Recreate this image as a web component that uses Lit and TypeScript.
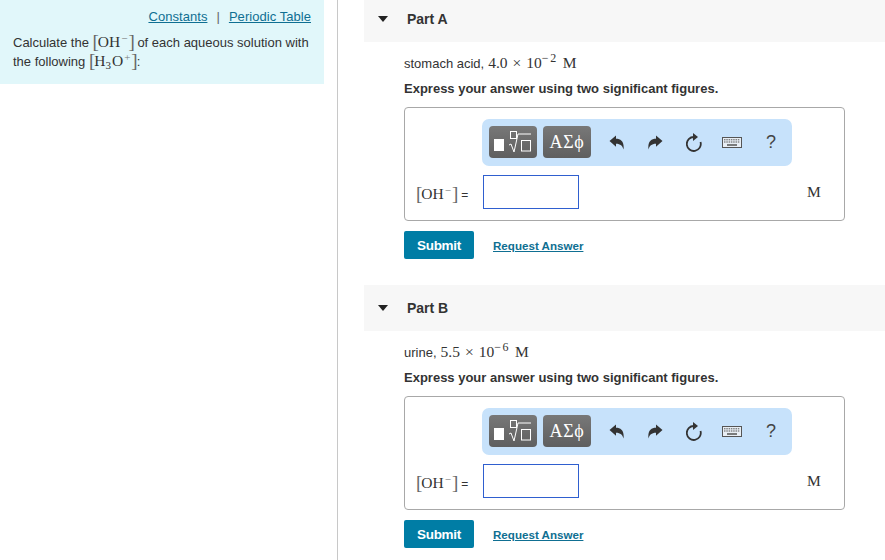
import { LitElement, html, css, svg } from 'lit';
import { customElement, property } from 'lit/decorators.js';

const back = svg`<path d="M0.500 6 L7 0.500 V3.800 C12 3.800 15.500 7 14.500 14.500 C13.500 11 11.500 8.800 7 8.800 V11.800 Z" fill="#333"/>`;

// typeset chemistry, shared by the intro and the answer label
const texStyles = css`
  .tex {
    font-family: 'Liberation Serif', serif;
    font-size: 15.500px;
    line-height: 0;
    white-space: pre;
  }
  .tex .br {
    font-size: 19px;
    font-weight: normal;
    letter-spacing: -1px;
    color: #666;
    line-height: 0;
    vertical-align: -1px;
  }
  .tex sup {
    font-size: 11px;
    line-height: 0;
    vertical-align: 5px;
    margin: 0 1px;
    color: #777;
  }
  .tex sub {
    font-size: 11px;
    line-height: 0;
    vertical-align: -3px;
    margin: 0 1px 0 0;
  }
`;

@customElement('part-block')
export class PartBlock extends LitElement {
  @property() label = '';
  @property() solution = '';
  @property() value = '';
  @property() exponent = '';

  static styles = [
    texStyles,
    css`
      :host {
        display: block;
        height: 289px;
      }
      .head {
        height: 46px;
        background: #f7f7f7;
        display: flex;
        align-items: center;
        font-weight: bold;
        font-size: 14px;
        color: #333;
      }
      .caret {
        width: 0;
        height: 0;
        margin: 0 19px 0 14px;
        border-left: 5.500px solid transparent;
        border-right: 5.500px solid transparent;
        border-top: 6px solid #222;
      }
      .body {
        padding: 8px 40px 0;
      }
      .prompt {
        height: 26px;
        display: flex;
        align-items: center;
        font-size: 13px;
        color: #333;
      }
      .math {
        font-family: 'Liberation Serif', serif;
        font-size: 15.500px;
        margin-left: 4px;
        white-space: pre;
      }
      .math .times {
        margin: 0 5px;
      }
      .math sup {
        font-size: 12px;
        line-height: 0;
        letter-spacing: 1.500px;
        vertical-align: 6px;
      }
      .math .unit-m {
        margin-left: 5px;
      }
      .hint {
        font-weight: bold;
        font-size: 13px;
        line-height: 20px;
        margin-top: 3px;
        color: #333;
      }
      .answer {
        box-sizing: border-box;
        height: 114px;
        width: 441px;
        margin-top: 8px;
        padding: 11px 0 0 11px;
        border: 1px solid #a8a8a8;
        border-radius: 4px;
      }
      .tools {
        box-sizing: border-box;
        width: 310px;
        height: 47px;
        margin-left: 66px;
        padding: 7px 6px 0 7px;
        display: flex;
        align-items: flex-start;
        background: #c7e2fb;
        border-radius: 7px;
      }
      .tool {
        box-sizing: border-box;
        width: 48px;
        height: 32px;
        margin-right: 6px;
        border-radius: 4px;
        background: linear-gradient(#787878, #5f5f5f);
        display: flex;
        align-items: center;
        justify-content: center;
        color: #fff;
      }
      .tool.sym {
        margin-right: 0;
        font-family: 'Liberation Serif', serif;
        font-size: 18px;
        letter-spacing: 0.6px;
      }
      .icons {
        display: flex;
        align-items: center;
        height: 32px;
        margin-left: 18px;
      }
      .icon {
        display: block;
        flex: none;
      }
      .undo {
        margin-right: 24px;
      }
      .redo {
        margin-right: 23px;
        transform: scaleX(-1);
      }
      .reload {
        margin-right: 20px;
      }
      .keys {
        margin-right: 24px;
      }
      .help {
        font-size: 18px;
        color: #444;
      }
      .row {
        display: flex;
        align-items: center;
        margin-top: 9px;
        height: 34px;
      }
      .lhs {
        width: 67px;
        color: #333;
        white-space: pre;
      }
      .lhs small {
        font-family: 'Liberation Sans', sans-serif;
        font-size: 12px;
      }
      .field {
        box-sizing: border-box;
        width: 96px;
        height: 34px;
        border: 1px solid #2f5fcf;
        background: #fff;
      }
      .unit {
        font-family: 'Liberation Serif', serif;
        font-size: 15.500px;
        color: #333;
        margin-left: 228px;
      }
      .actions {
        display: flex;
        align-items: center;
        margin-top: 10px;
      }
      .submit {
        box-sizing: border-box;
        width: 70px;
        height: 28px;
        border: 0;
        padding: 0;
        border-radius: 2px;
        background: #007da5;
        color: #fff;
        font: bold 13.500px 'Liberation Sans', sans-serif;
        letter-spacing: -0.3px;
      }
      .request {
        margin-left: 19px;
        font-size: 11.600px;
        font-weight: bold;
        color: #0f6f92;
        text-decoration: underline;
      }
    `,
  ];

  render() {
    return html`
      <div class="head"><span class="caret"></span>${this.label}</div>
      <div class="body">
        <div class="prompt">
          ${this.solution},
          <span class="math">${this.value}<span class="times">×</span>10<sup>−${this.exponent}</sup><span class="unit-m">M</span></span>
        </div>
        <div class="hint">Express your answer using two significant figures.</div>
        <div class="answer">
          <div class="tools">
            <div class="tool">
              <svg width="38" height="24" viewBox="0 0 38 24">
                <rect x="0" y="9" width="10" height="12" fill="#fff" />
                <rect x="16.500" y="1.500" width="6" height="7" fill="none" stroke="#fff" />
                <path d="M15 15 L17 14 L20 22 L24 4 H37" fill="none" stroke="#fff" />
                <rect x="27.500" y="10.500" width="9" height="10.500" fill="none" stroke="#fff" />
              </svg>
            </div>
            <div class="tool sym">ΑΣϕ</div>
            <div class="icons">
              <svg class="icon undo" width="15" height="15" viewBox="0 0 15 15">${back}</svg>
              <svg class="icon redo" width="15" height="15" viewBox="0 0 15 15">${back}</svg>
              <svg class="icon reload" width="16" height="19" viewBox="0 0 16 19">
                <path d="M8 4 A7 7 0 1 0 14.500 9" fill="none" stroke="#333" stroke-width="1.800" />
                <path d="M7 0 L12 4 L7 8 Z" fill="#333" />
              </svg>
              <svg class="icon keys" width="20" height="11" viewBox="0 0 20 11">
                <rect x="0.500" y="0.500" width="19" height="10" fill="#e8eef4" stroke="#555" />
                <path d="M2 2.800 H18 M2 5 H18" stroke="#555" stroke-dasharray="1.500 0.800" />
                <path d="M5 8 H15" stroke="#555" stroke-width="1.500" />
              </svg>
              <span class="help">?</span>
            </div>
          </div>
          <div class="row">
            <span class="lhs tex"><span class="br">[</span>OH<sup>−</sup><span class="br">]</span> <small>=</small></span>
            <span class="field"></span>
            <span class="unit">M</span>
          </div>
        </div>
        <div class="actions">
          <button class="submit">Submit</button>
          <a class="request">Request Answer</a>
        </div>
      </div>
    `;
  }
}

@customElement('app-root')
export class AppRoot extends LitElement {
  static styles = [
    texStyles,
    css`
      :host {
        display: flex;
        height: 560px;
        overflow: hidden;
        background: #fff;
        font-family: 'Liberation Sans', Arial, sans-serif;
      }
      .side {
        width: 337px;
        height: 560px;
        border-right: 1px solid #c8c8c8;
      }
      .intro {
        box-sizing: border-box;
        width: 324px;
        height: 84px;
        padding: 7px 13px 0;
        background: #e1f7fa;
        font-size: 13px;
        color: #333;
      }
      .links {
        display: flex;
        justify-content: flex-end;
        line-height: 20px;
        color: #0f6f92;
        letter-spacing: 0.05px;
      }
      .links a {
        text-decoration: underline;
      }
      .links span {
        margin: 0 9px;
        color: #666;
      }
      .copy {
        margin-top: 6px;
        line-height: 19px;
      }
    `,
  ];

  render() {
    return html`
      <div class="side">
        <div class="intro">
          <div class="links"><a>Constants</a><span>|</span><a>Periodic Table</a></div>
          <div class="copy">
            Calculate the <span class="tex"><span class="br">[</span>OH<sup>−</sup><span class="br">]</span></span> of each aqueous solution with
            the following <span class="tex"><span class="br">[</span>H<sub>3</sub>O<sup>+</sup><span class="br">]</span></span>:
          </div>
        </div>
      </div>
      <div class="parts" style="flex:1;min-width:0;margin:-4px 0 0 26px">
        <part-block label="Part A" solution="stomach acid" value="4.0" exponent="2"></part-block>
        <part-block label="Part B" solution="urine" value="5.5" exponent="6"></part-block>
      </div>
    `;
  }
}
